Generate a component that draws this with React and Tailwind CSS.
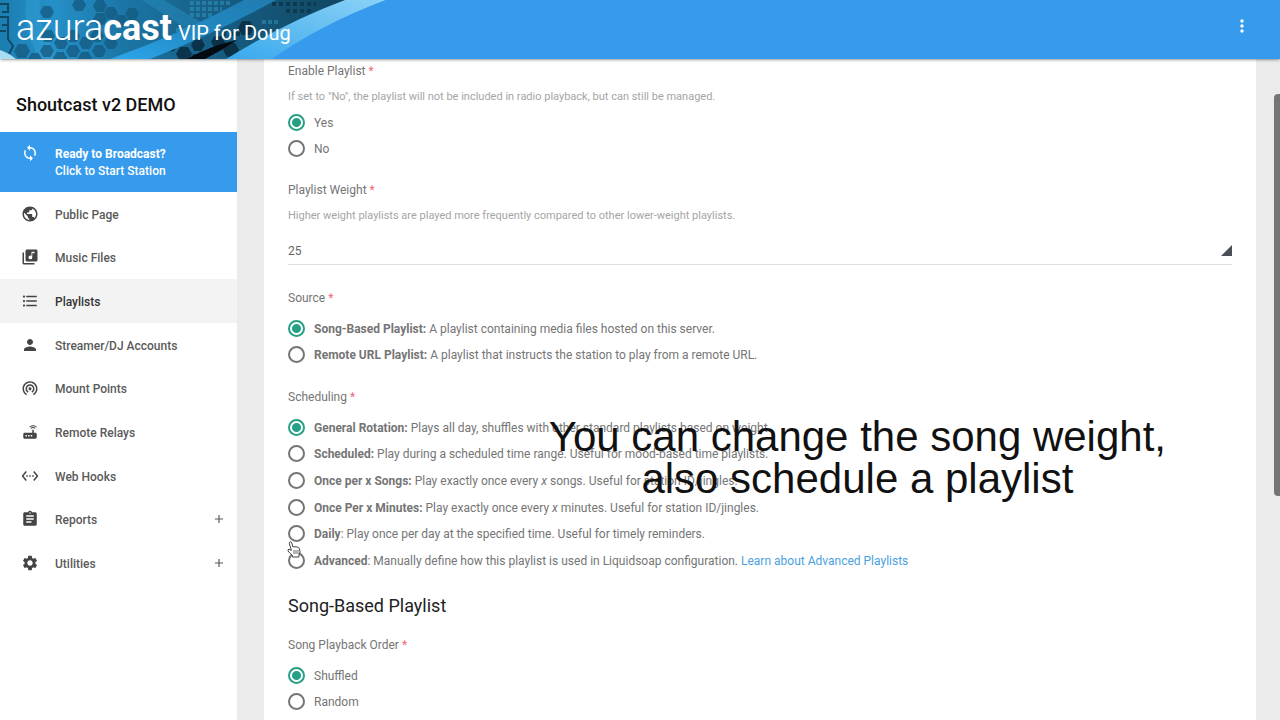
import React from 'react';
import {
    MdAdd,
    MdAssignment,
    MdFormatListBulleted,
    MdLibraryMusic,
    MdMoreVert,
    MdPerson,
    MdPublic,
    MdRouter,
    MdSettings,
    MdSettingsEthernet,
    MdSync,
    MdWifiTethering,
} from 'react-icons/md';

const NAV_ITEMS = [
    { label: 'Public Page', icon: MdPublic },
    { label: 'Music Files', icon: MdLibraryMusic },
    { label: 'Playlists', icon: MdFormatListBulleted, active: true },
    { label: 'Streamer/DJ Accounts', icon: MdPerson },
    { label: 'Mount Points', icon: MdWifiTethering },
    { label: 'Remote Relays', icon: MdRouter },
    { label: 'Web Hooks', icon: MdSettingsEthernet },
    { label: 'Reports', icon: MdAssignment, expandable: true },
    { label: 'Utilities', icon: MdSettings, expandable: true },
];

// Flat-top hexagon as an SVG points list
const hexagon = (cx, cy, r) =>
    [0, 1, 2, 3, 4, 5]
        .map((i) => {
            const a = (Math.PI / 3) * i;
            return `${(cx + r * Math.cos(a)).toFixed(1)},${(cy + r * Math.sin(a)).toFixed(1)}`;
        })
        .join(' ');

const DARK_HEXAGONS = [
    [47, 12, 7], [79, 5, 7], [100, 6, 7], [111, 13, 7], [121, 21, 7], [100, 19, 7], [132, 14, 7],
    [22, 51, 8], [48, 36, 7], [61, 43, 7], [47, 51, 7], [35, 59, 7], [73, 51, 7], [60, 58, 7], [86, 43, 7],
    [85, 58, 7], [99, 51, 7], [73, 36, 7], [111, 43, 7], [97, 36, 7],
];

const BLACK_HEXAGONS = [
    [184, 54, 8], [198, 45, 7], [197, 61, 8], [246, 28, 8], [231, 50, 8], [218, 42, 7], [171, 46, 6],
];

/**
 * Header artwork behind the logo
 */
const HeaderArt = () => (
    <svg className="absolute top-0 left-0 h-full w-[400px]" viewBox="0 0 400 59" aria-hidden="true">
        <defs>
            <linearGradient id="art" x1="0" x2="1">
                <stop offset="0" stopColor="#1b7db0" />
                <stop offset="0.15" stopColor="#2590c8" />
                <stop offset="0.35" stopColor="#1b76a6" />
                <stop offset="0.6" stopColor="#175f86" />
                <stop offset="1" stopColor="#10455f" />
            </linearGradient>
            <linearGradient id="ray" x1="0" y1="1" x2="1" y2="0">
                <stop offset="0" stopColor="#2ba6ec" />
                <stop offset="0.5" stopColor="#2389c3" />
                <stop offset="1" stopColor="#1f7cb0" />
            </linearGradient>
            <linearGradient id="edge" x1="0" y1="1" x2="1" y2="0">
                <stop offset="0" stopColor="#37a9ee" />
                <stop offset="0.5" stopColor="#62bdf0" />
                <stop offset="1" stopColor="#8ad2f8" />
            </linearGradient>
        </defs>
        <path d="M0 0H352Q300 26 250 59H0Z" fill="url(#art)" />
        <path d="M26 0h14q-4 26 20 59H40Q22 30 26 0Z" fill="#38a8dd" fillOpacity="0.35" />
        {DARK_HEXAGONS.map(([x, y, r]) => (
            <polygon key={`${x}-${y}`} points={hexagon(x, y, r)} fill="#145a80" fillOpacity="0.75" />
        ))}
        {BLACK_HEXAGONS.map(([x, y, r]) => (
            <polygon key={`${x}-${y}`} points={hexagon(x, y, r)} fill="#082c40" fillOpacity="0.85" />
        ))}
        <g fill="none" stroke="#0f4966" strokeWidth="2">
            <path d="M0 4h8v8H2M0 17h8v8H2M8 25v14l5 7-4 8M0 31h6" />
        </g>
        <g fill="none" stroke="#3aa4d2" strokeOpacity="0.4" strokeWidth="4" strokeDasharray="4 2">
            <path d="M190 3h40M190 9h32M190 15h22M176 30h24M180 36h14M262 22h18" />
        </g>
        <g fill="none" stroke="#0c3a52" strokeWidth="4" strokeDasharray="4 3">
            <path d="M272 4h44M286 11h28M222 34h20" />
        </g>
        <path d="M142 0h22l40 24-16 6Z" fill="#2587b8" fillOpacity="0.6" />
        <path d="M0 50q9 3 16 9H0Z" fill="#a9dcf5" />
        <path d="M110 59Q180 34 244 0h32Q216 33 150 59Z" fill="url(#ray)" />
        <path d="M187 59q25-14 50-19-16 11-32 19Z" fill="#030a10" />
        <path d="M226 59Q286 22 345 0h41Q322 24 272 59Z" fill="url(#edge)" />
        <path d="M386 0Q322 24 272 59H400V0Z" fill="#369bec" />
    </svg>
);

const Header = () => (
    <header className="relative z-20 flex h-[59px] shrink-0 items-center justify-between bg-[#369bec] pr-7 pl-4 text-white shadow-sm shadow-black/30">
        <HeaderArt />
        <a href="#home" className="relative flex items-baseline gap-[6px] pb-1">
            <span className="text-[36px] leading-10 font-light">
                azura<b className="font-bold">cast</b>
            </span>
            <span className="text-[20px]">VIP for Doug</span>
        </a>
        <button type="button" aria-label="Menu" className="relative pb-2">
            <MdMoreVert className="size-5" />
        </button>
    </header>
);

const Sidebar = () => (
    <aside className="w-[237px] shrink-0 bg-white text-[12px] font-medium text-[#5a5a5a]">
        <h2 className="flex h-[73px] items-center px-4 pt-[18px] text-[18px] text-[#111]">Shoutcast v2 DEMO</h2>
        <a href="#start" className="flex h-[60px] gap-4 bg-[#369bec] px-[21px] pt-3 leading-[17px] text-white">
            <MdSync className="size-[18px]" />
            <span className="pt-[2px]">
                <b className="block">Ready to Broadcast?</b>
                Click to Start Station
            </span>
        </a>
        <nav className="grid h-[393px] grid-rows-9">
            {NAV_ITEMS.map(({ label, icon: Icon, active, expandable }) => (
                <a
                    key={label}
                    href={`#${label}`}
                    className={`flex items-center gap-4 pr-[11px] pl-[21px] ${active ? 'bg-[#f3f3f3] text-[#333]' : ''}`}
                >
                    <Icon className="size-[18px] text-[#444]" />
                    <span className="flex-1 pt-[2px]">{label}</span>
                    {expandable && <MdAdd className="size-[14px]" />}
                </a>
            ))}
        </nav>
    </aside>
);

const Option = ({ name, checked, children }) => (
    <label className="flex items-center gap-[9px]">
        <input
            type="radio"
            name={name}
            defaultChecked={checked}
            className="size-[17px] shrink-0 appearance-none rounded-full border-2 border-[#757575] checked:border-[#26a085] checked:bg-[radial-gradient(circle,#26a085_4px,transparent_5px)]"
        />
        <span className="pt-px">{children}</span>
    </label>
);

const Legend = ({ children }) => (
    <span className="block leading-4">
        {children} <span className="text-[#f06a75]">*</span>
    </span>
);

const Hint = ({ children }) => <p className="mt-[10px] leading-4 text-[11px] text-[#a5a5a5]">{children}</p>;

const PlaylistForm = () => (
    <form className="flex-1 self-start bg-white px-6 pt-1 text-[12px] text-[#757575]">
        <div role="radiogroup" aria-label="Enable Playlist">
            <Legend>Enable Playlist</Legend>
            <Hint>If set to "No", the playlist will not be included in radio playback, but can still be managed.</Hint>
            <div className="mt-1 grid h-[53px] auto-rows-fr">
                <Option name="enable" checked>Yes</Option>
                <Option name="enable">No</Option>
            </div>
        </div>

        <div className="mt-5">
            <label htmlFor="weight">
                <Legend>Playlist Weight</Legend>
            </label>
            <Hint>Higher weight playlists are played more frequently compared to other lower-weight playlists.</Hint>
            <div className="relative mt-3">
                <select id="weight" defaultValue="25" className="h-[29px] w-full appearance-none border-b border-[#e0e0e0] pt-[2px] text-[#666]">
                    <option>25</option>
                </select>
                <svg className="pointer-events-none absolute top-[9px] right-0 size-[11px]" viewBox="0 0 12 12" aria-hidden="true">
                    <path d="M12 0v12H0Z" fill="#495057" />
                </svg>
            </div>
        </div>

        <div role="radiogroup" aria-label="Source" className="mt-[25px]">
            <Legend>Source</Legend>
            <div className="mt-[9px] grid h-[53px] auto-rows-fr">
                <Option name="source" checked>
                    <b>Song-Based Playlist:</b> A playlist containing media files hosted on this server.
                </Option>
                <Option name="source">
                    <b>Remote URL Playlist:</b> A playlist that instructs the station to play from a remote URL.
                </Option>
            </div>
        </div>

        <div role="radiogroup" aria-label="Scheduling" className="mt-[21px]">
            <Legend>Scheduling</Legend>
            <div className="mt-[9px] grid h-[160px] auto-rows-fr">
                <Option name="scheduling" checked>
                    <b>General Rotation:</b> Plays all day, shuffles with other standard playlists based on weight.
                </Option>
                <Option name="scheduling">
                    <b>Scheduled:</b> Play during a scheduled time range. Useful for mood-based time playlists.
                </Option>
                <Option name="scheduling">
                    <b>Once per x Songs:</b> Play exactly once every <i>x</i> songs. Useful for station ID/jingles.
                </Option>
                <Option name="scheduling">
                    <b>Once Per x Minutes:</b> Play exactly once every <i>x</i> minutes. Useful for station ID/jingles.
                </Option>
                <Option name="scheduling">
                    <b>Daily</b>: Play once per day at the specified time. Useful for timely reminders.
                </Option>
                <Option name="scheduling">
                    <b>Advanced</b>: Manually define how this playlist is used in Liquidsoap configuration.{' '}
                    <a href="#advanced" className="text-[#4a9fe0]">Learn about Advanced Playlists</a>
                </Option>
            </div>
        </div>

        <h3 className="mt-5 text-[18px] leading-6 text-[#222]">Song-Based Playlist</h3>

        <div role="radiogroup" aria-label="Song Playback Order" className="mt-[19px]">
            <Legend>Song Playback Order</Legend>
            <div className="mt-[9px] grid h-[80px] auto-rows-fr">
                <Option name="order" checked>Shuffled</Option>
                <Option name="order">Random</Option>
                <Option name="order">Sequential</Option>
            </div>
        </div>
    </form>
);

// Hand pointer resting over the option list
const HandPointer = () => (
    <svg className="absolute top-[541px] left-[287px] h-[17px] w-[15px]" viewBox="0 0 15 17" aria-hidden="true">
        <path
            d="M4 8L2.300 2.600Q2 1 3.200.8 4.300.7 4.800 2L6 6q1-.8 2 0 1.200-.8 2 .2 2-.4 2.300 1.300L13 10.500q.2 1.500-1 3V16H5.500v-1.500Q3 12.500 1 10 .6 8.500 2 8.300 3 8.300 4.300 9.500Z"
            fill="#fff"
            stroke="#444"
            strokeWidth="1"
        />
        <path d="M7 9v4M9 9v4M11 9v4" stroke="#444" strokeWidth="0.8" />
    </svg>
);

const App = () => (
    <div className="relative flex h-screen flex-col overflow-hidden bg-[#ebebeb] font-['Roboto',sans-serif]">
        <Header />
        <main className="flex min-h-0 flex-1 gap-[27px] pr-6">
            <Sidebar />
            <PlaylistForm />
        </main>
        <div className="absolute top-[94px] right-0 h-[402px] w-[6px] rounded-l-sm bg-[#757575]" />
        <HandPointer />
        <p className="pointer-events-none absolute top-[416px] right-[114px] text-center font-['Liberation_Sans',sans-serif] text-[42px] leading-[42px] text-[#111]">
            You can change the song weight,
            <br />
            also schedule a playlist
        </p>
    </div>
);

export default App;
